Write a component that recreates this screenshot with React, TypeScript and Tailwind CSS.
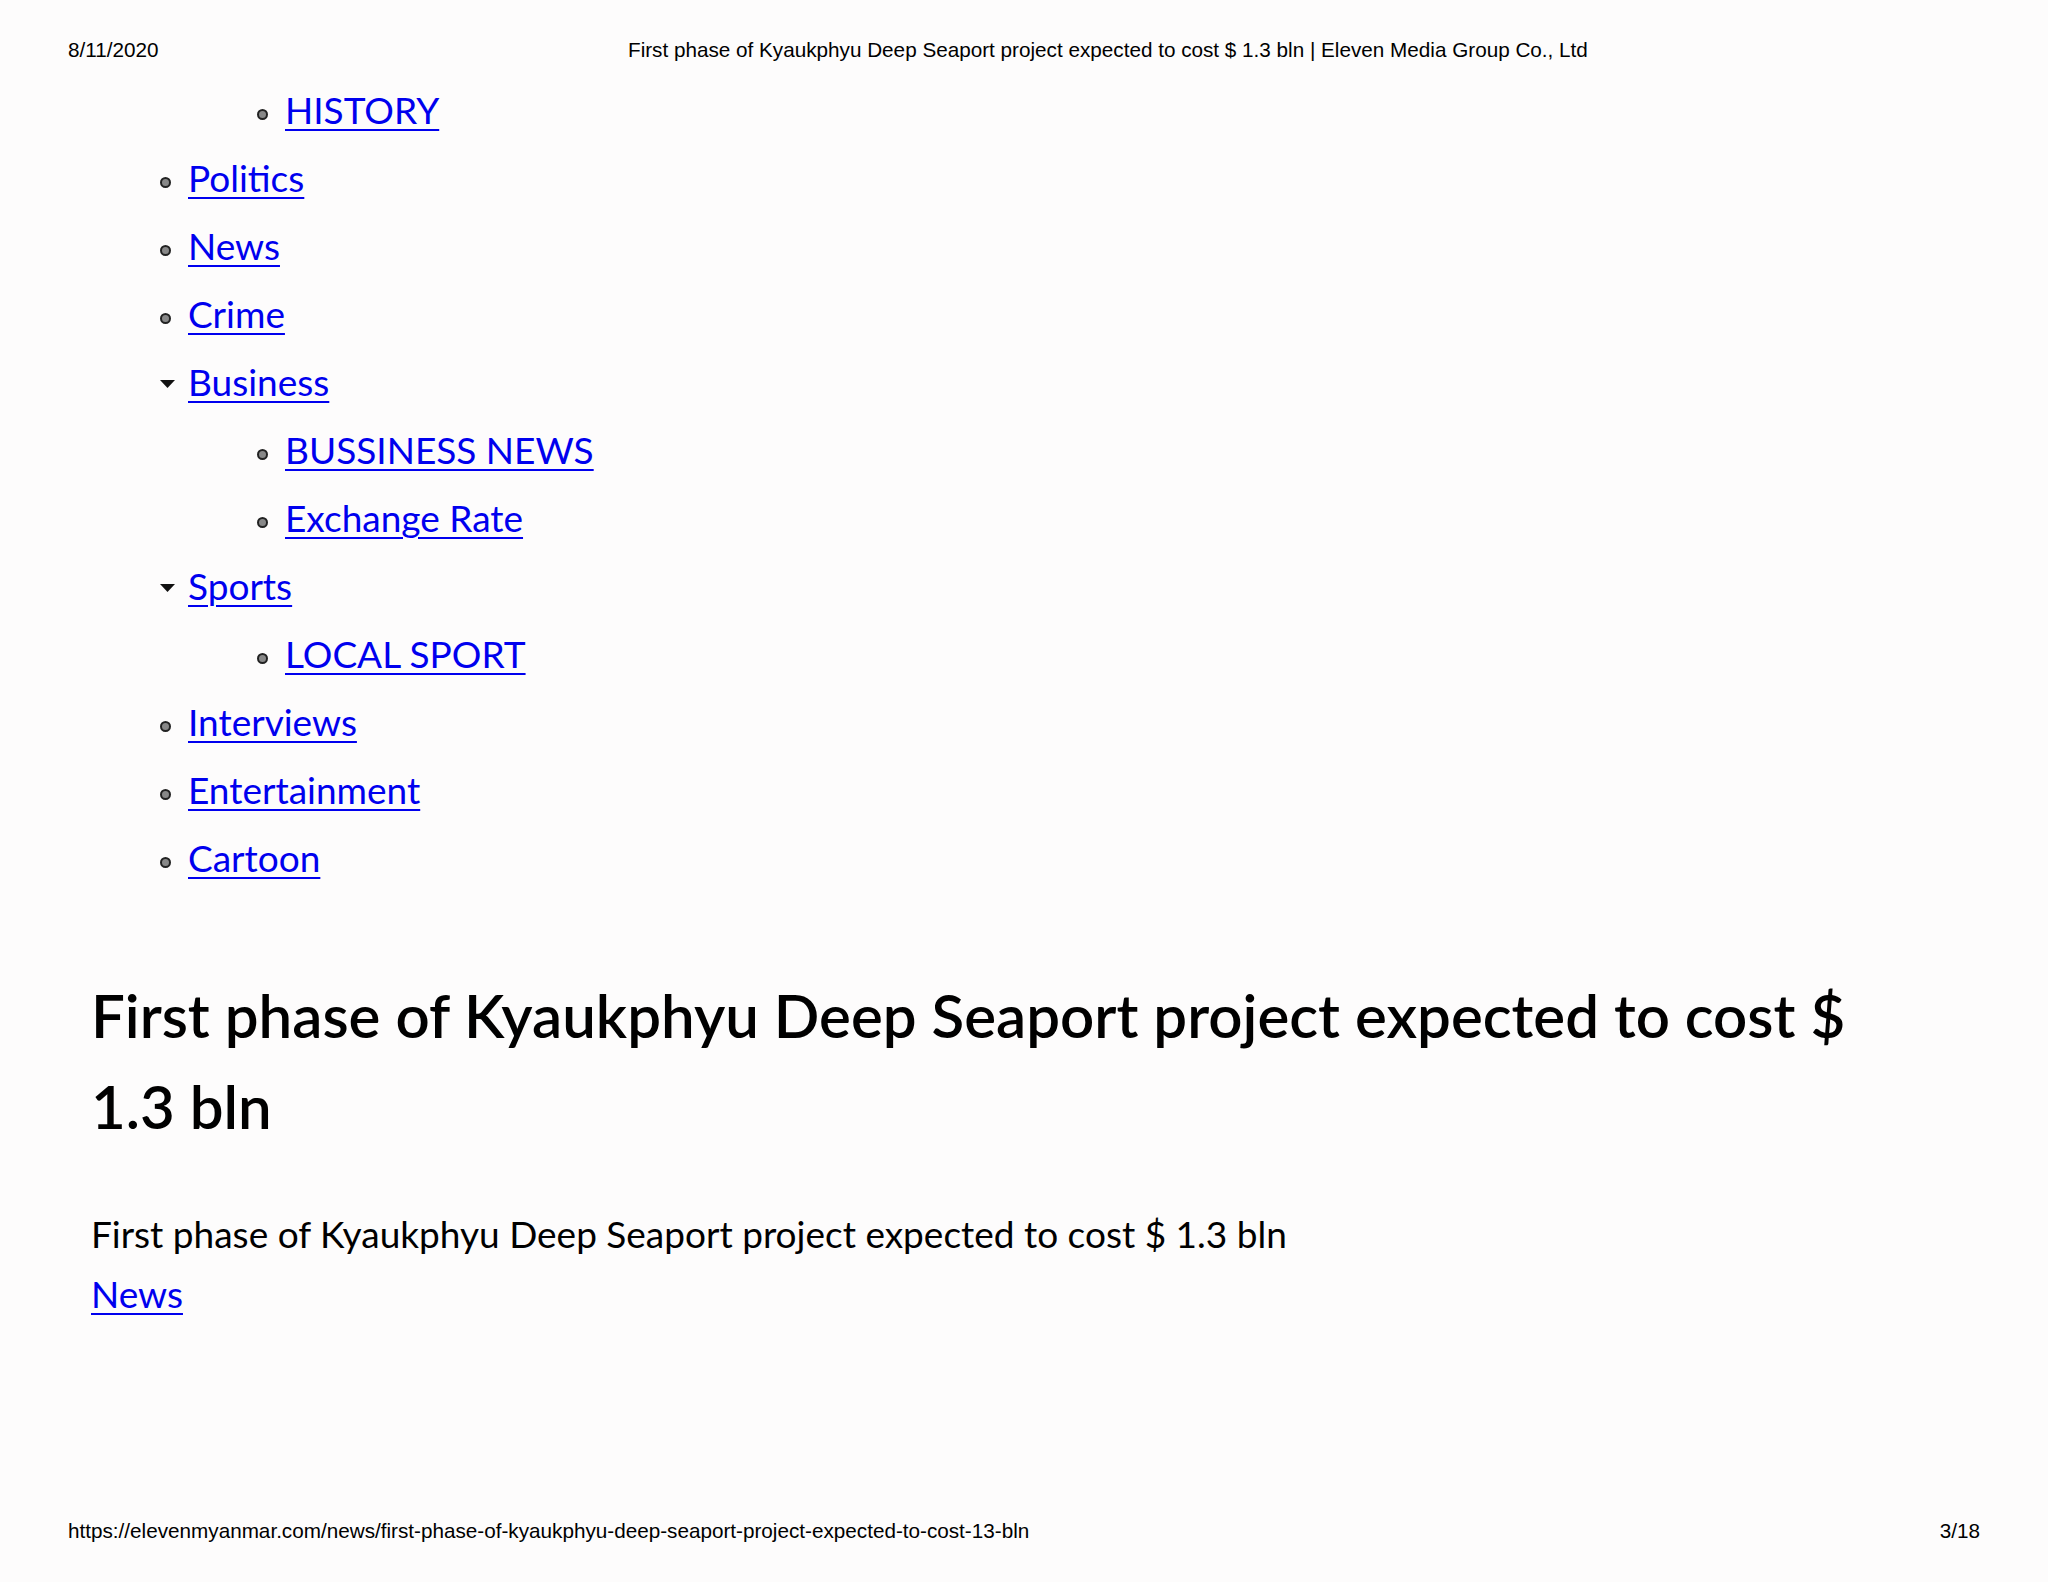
import React from "react";

type Item = { label: string; level: 1 | 2; caret?: boolean };
const items: Item[] = [
  { label: "HISTORY", level: 2 },
  { label: "Politics", level: 1 },
  { label: "News", level: 1 },
  { label: "Crime", level: 1 },
  { label: "Business", level: 1, caret: true },
  { label: "BUSSINESS NEWS", level: 2 },
  { label: "Exchange Rate", level: 2 },
  { label: "Sports", level: 1, caret: true },
  { label: "LOCAL SPORT", level: 2 },
  { label: "Interviews", level: 1 },
  { label: "Entertainment", level: 1 },
  { label: "Cartoon", level: 1 },
];

const link = "text-[#0000ee] underline decoration-[2px] underline-offset-[5px]";

export default function App() {
  return (
    <div className="w-[2048px] h-[1582px] bg-[#fdfcfc] flex flex-col text-black" style={{ fontFamily: "Lato, 'Noto Sans', sans-serif" }}>
      <div className="flex pt-[37px] h-[62px] text-[20.7px] leading-[26px]" style={{ fontFamily: "'Liberation Sans', Arial, sans-serif" }}>
        <span className="ml-[68px] w-[560px]">8/11/2020</span>
        <span>First phase of Kyaukphyu Deep Seaport project expected to cost $ 1.3 bln | Eleven Media Group Co., Ltd</span>
      </div>
      <ul className="mt-[14px]">
        {items.map((it) => (
          <li key={it.label} className={`flex items-center h-[68px] text-[37px] ${it.level === 1 ? "pl-[160px]" : "pl-[257px]"}`}>
            <span className="w-[28px] flex items-center justify-start">
              {it.caret ? (
                <svg width="15" height="10" viewBox="0 0 15 10" className="mt-[4px]"><path d="M0 1 L15 1 L7.5 9 Z" fill="#111" /></svg>
              ) : (
                <span className="block w-[11px] h-[11px] rounded-full bg-[#888] border-[2px] border-[#222] mt-[8px]" />
              )}
            </span>
            <a className={link}>{it.label}</a>
          </li>
        ))}
      </ul>
      <h1 className="mt-[78px] ml-[91px] w-[1830px] text-[60px] leading-[91px] font-semibold">
        First phase of Kyaukphyu Deep Seaport project expected to cost $ 1.3 bln
      </h1>
      <p className="mt-[52px] ml-[91px] text-[37px] leading-[60px]">First phase of Kyaukphyu Deep Seaport project expected to cost $ 1.3 bln</p>
      <div className="ml-[91px] text-[37px] leading-[60px]"><a className={link}>News</a></div>
      <div className="mt-auto mb-[38px] flex justify-between px-[68px] text-[20.7px] leading-[26px]" style={{ fontFamily: "'Liberation Sans', Arial, sans-serif" }}>
        <span>https://elevenmyanmar.com/news/first-phase-of-kyaukphyu-deep-seaport-project-expected-to-cost-13-bln</span>
        <span>3/18</span>
      </div>
    </div>
  );
}
